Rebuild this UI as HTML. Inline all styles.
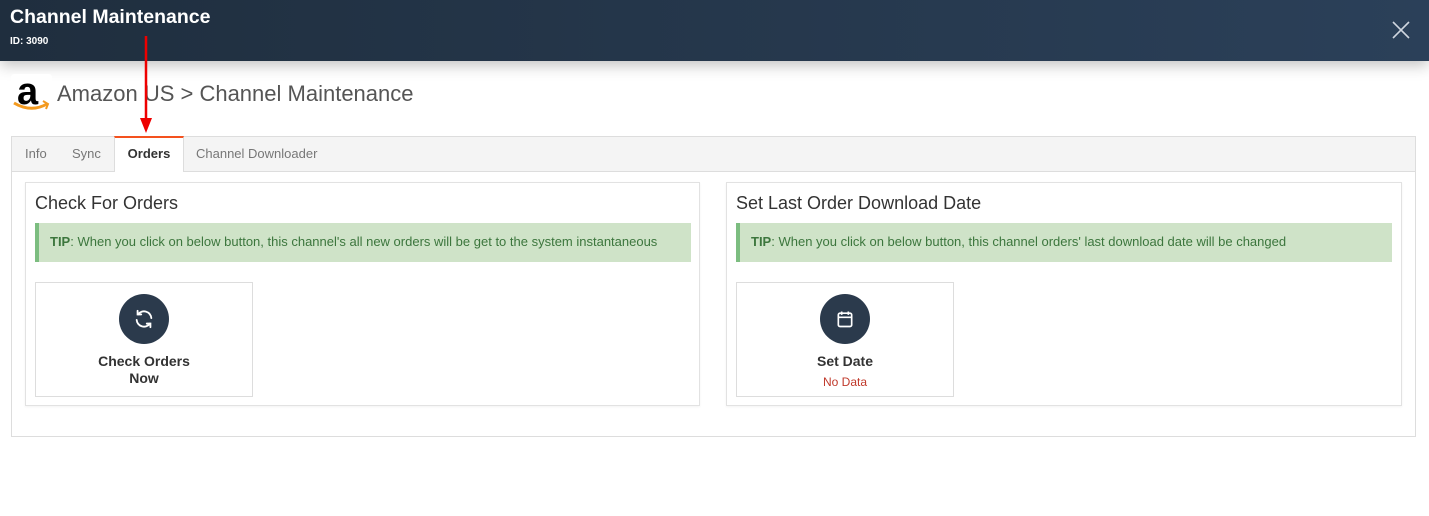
<!DOCTYPE html>
<html><head><style>
*{box-sizing:border-box;margin:0;padding:0}
body{width:1429px;height:516px;background:#fff;font-family:"Liberation Sans",Arial,sans-serif;position:relative;overflow:hidden}
.hdr{position:absolute;left:0;top:0;width:1429px;height:61px;background:linear-gradient(90deg,#1f2e3e,#2b4059);box-shadow:0 4px 14px rgba(0,0,0,.25)}
.hdr h1{position:absolute;left:10px;top:6px;color:#fff;font-size:19.5px;font-weight:bold}
.hdr .id{position:absolute;left:10px;top:36px;color:#fff;font-size:10px;font-weight:bold}
.x{position:absolute;left:1391px;top:20px}
.logo{position:absolute;left:11px;top:74px;width:41px;height:38px;background:#fff;border-radius:3px}
.title{position:absolute;left:57px;top:81px;font-size:22px;color:#555}
.box{position:absolute;left:11px;top:136px;width:1405px;height:301px;border:1px solid #ddd}
.tabs{height:35px;background:#f4f4f4;border-bottom:1px solid #ddd;position:relative}
.tab{position:absolute;top:0;height:35px;line-height:34px;font-size:13px;color:#777}
.tab.act{background:#fff;border-top:2px solid #f4511e;border-left:1px solid #ddd;border-right:1px solid #ddd;height:36px;color:#333;line-height:31px;text-align:center}
.panel{position:absolute;top:182px;height:224px;border:1px solid #e2e2e2;box-shadow:0 1px 2px rgba(0,0,0,.05)}
.panel h2{position:absolute;left:9px;top:10px;font-size:18px;font-weight:normal;color:#333}
.tip{position:absolute;left:9px;top:40px;height:39px;background:#cfe3c8;border-left:4px solid #7cbd80;font-size:13px;color:#3c763d;line-height:38px;padding-left:11px;white-space:nowrap}
.btn{position:absolute;left:9px;top:99px;width:218px;height:115px;border:1px solid #ddd;text-align:center}
.circ{width:50px;height:50px;border-radius:50%;background:#2b3a4c;margin:11px auto 0;display:flex;align-items:center;justify-content:center}
.bl{font-size:14px;font-weight:bold;color:#333;margin-top:9px;line-height:17px}
</style></head><body>
<div class="hdr"><h1>Channel Maintenance</h1><div class="id">ID: 3090</div>
<svg class="x" width="20" height="20" viewBox="0 0 20 20"><path d="M2 2L18 18M18 2L2 18" stroke="#cfd6df" stroke-width="1.6"/></svg></div>
<div class="logo"><svg width="41" height="38" viewBox="0 0 41 38"><text x="6" y="30" font-family="Liberation Sans" font-weight="bold" font-size="38" fill="#000">a</text><path d="M3 29Q20 39 36 30" stroke="#f39a1f" stroke-width="3" fill="none"/><path d="M32 27L37 30L35 35" stroke="#f39a1f" stroke-width="2" fill="none"/></svg></div>
<div class="title">Amazon US &gt; Channel Maintenance</div>
<div class="box"><div class="tabs">
<div class="tab" style="left:13px">Info</div>
<div class="tab" style="left:60px">Sync</div>
<div class="tab act" style="left:102px;width:70px;top:-1px;font-weight:bold">Orders</div>
<div class="tab" style="left:184px">Channel Downloader</div>
</div></div>
<div class="panel" style="left:25px;width:675px"><h2>Check For Orders</h2>
<div class="tip" style="width:656px"><b>TIP</b>: When you click on below button, this channel's all new orders will be get to the system instantaneous</div>
<div class="btn"><div class="circ"><svg width="22" height="22" viewBox="0 0 24 24" fill="none" stroke="#fff" stroke-width="2" stroke-linecap="round"><path d="M20 11A8 8 0 0 0 5.5 7M4 13a8 8 0 0 0 14.5 4"/><path d="M5 3v4h4M19 21v-4h-4"/></svg></div><div class="bl">Check Orders<br>Now</div></div></div>
<div class="panel" style="left:726px;width:676px"><h2>Set Last Order Download Date</h2>
<div class="tip" style="width:656px"><b>TIP</b>: When you click on below button, this channel orders' last download date will be changed</div>
<div class="btn"><div class="circ"><svg width="20" height="20" viewBox="0 0 24 24" fill="none" stroke="#fff" stroke-width="2"><rect x="4" y="5" width="16" height="16" rx="2"/><path d="M4 10h16M8 3v4M16 3v4"/></svg></div><div class="bl">Set Date</div><div style="font-size:12px;color:#c0392b;margin-top:5px">No Data</div></div></div>
<svg style="position:absolute;left:0;top:0" width="300" height="140"><path d="M146 36V122" stroke="#e00" stroke-width="2.5"/><path d="M140 118L146 133L152 118Z" fill="#e00"/></svg>
</body></html>
